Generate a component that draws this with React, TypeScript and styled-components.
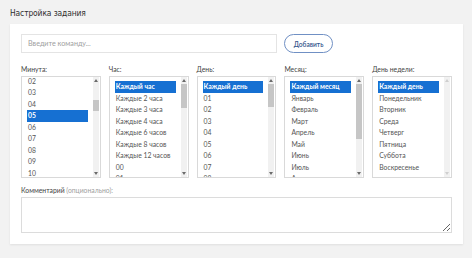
import React, { useLayoutEffect, useRef } from "react";
import styled, { createGlobalStyle } from "styled-components";

const ROW = 11.5;
const PAD = 4;
const VISIBLE = 100;
const ARROW = 7;

const GlobalStyle = createGlobalStyle`
  html, body { margin: 0; padding: 0; background: #fff; }
  body { font-family: Lato, "Open Sans", "DejaVu Sans", sans-serif; }
  * { box-sizing: border-box; }
`;

const Page = styled.div`
  width: 472px;
  height: 258px;
  background: #f2f2f2;
  padding: 0 9px 0 10px;
  display: flex;
  flex-direction: column;
`;

const Title = styled.h1`
  margin: 0;
  height: 24px;
  line-height: 26px;
  font-family: "DejaVu Sans Condensed", "DejaVu Sans", sans-serif;
  font-stretch: condensed;
  font-size: 8.4px;
  font-weight: 400;
  letter-spacing: -0.1px;
  color: #2e2e2e;
`;

const Card = styled.section`
  background: #fff;
  box-shadow: 0 1px 2px rgba(0, 0, 0, 0.08);
  padding: 10px 11px 11px;
`;

const CommandRow = styled.div`
  display: flex;
  gap: 7px;
  align-items: center;
`;

const CommandInput = styled.input`
  width: 256px;
  height: 19px;
  border: 1px solid #e4e4e4;
  padding: 0 6px;
  font-family: inherit;
  font-size: 7.2px;
  color: #333;
  outline: none;
  &::placeholder { color: #a0a0a0; }
`;

const AddButton = styled.button`
  width: 49px;
  height: 19px;
  border: 1.3px solid #7090c4;
  border-radius: 10px;
  background: #fff;
  color: #34558c;
  font-family: inherit;
  font-size: 6.6px;
  font-weight: 600;
  padding: 0;
`;

const Grid = styled.div`
  display: grid;
  grid-template-columns: repeat(5, 1fr);
  gap: 8px;
  margin-top: 11px;
`;

const Field = styled.div`
  display: flex;
  flex-direction: column;
  min-width: 0;
`;

const Label = styled.label`
  display: block;
  height: 10px;
  line-height: 10px;
  font-size: 6.8px;
  color: #444;
  margin-bottom: 2px;
`;

const Muted = styled.span`
  color: #a0a0a0;
`;

const ListBox = styled.div`
  position: relative;
  height: 102px;
  border: 1px solid #d9d9d9;
  background: #fff;
`;

const ListScroll = styled.div`
  height: 100%;
  overflow: hidden;
  padding: ${PAD}px 12px ${PAD}px 5px;
`;

const Option = styled.div<{ $selected?: boolean }>`
  height: ${ROW}px;
  line-height: ${ROW}px;
  font-size: 6.8px;
  padding: 0 1px;
  white-space: nowrap;
  overflow: hidden;
  color: ${(p) => (p.$selected ? "#fff" : "#555")};
  background: ${(p) => (p.$selected ? "#1670d2" : "transparent")};
  font-weight: ${(p) => (p.$selected ? 700 : 400)};
`;

const ScrollBar = styled.div`
  position: absolute;
  top: 0;
  bottom: 0;
  right: 1px;
  width: 6px;
  background: #f1f1f1;
`;

const Thumb = styled.div`
  position: absolute;
  left: 0;
  right: 0;
  background: #c6c6c6;
`;

const Arrow = styled.svg<{ $bottom?: boolean; $disabled?: boolean }>`
  position: absolute;
  left: 1px;
  width: 4px;
  height: 3px;
  ${(p) => (p.$bottom ? "bottom: 2px;" : "top: 2px;")}
  fill: ${(p) => (p.$disabled ? "#cfcfcf" : "#6b6b6b")};
`;

const Comment = styled.div`
  margin-top: 7px;
`;

const CommentArea = styled.textarea`
  display: block;
  width: 100%;
  height: 36px;
  border: 1px solid #dcdcdc;
  resize: vertical;
  font-family: inherit;
  font-size: 7.5px;
  outline: none;
`;

type ListProps = {
  label: string;
  items: string[];
  selected: string;
  scrollTo?: string;
};

function SelectList({ label, items, selected, scrollTo }: ListProps) {
  const ref = useRef<HTMLDivElement>(null);
  const idx = scrollTo ? items.indexOf(scrollTo) : -1;
  const scroll = idx > 0 ? PAD + 1.5 + idx * ROW : 0;
  const content = PAD * 2 + items.length * ROW;
  const scrollable = content > VISIBLE;
  const track = VISIBLE - ARROW * 2;
  const thumbH = scrollable ? Math.max(8, (VISIBLE / content) * track) : 0;
  const thumbTop = scrollable ? ARROW + (scroll / (content - VISIBLE)) * (track - thumbH) : 0;

  useLayoutEffect(() => {
    if (ref.current) ref.current.scrollTop = scroll;
  }, [scroll]);

  return (
    <Field>
      <Label>{label}</Label>
      <ListBox>
        <ListScroll ref={ref}>
          {items.map((it) => (
            <Option key={it} $selected={it === selected}>
              {it}
            </Option>
          ))}
        </ListScroll>
        <ScrollBar>
          <Arrow viewBox="0 0 4 3" $disabled={!scrollable}>
            <polygon points="0,3 2,0 4,3" />
          </Arrow>
          {scrollable && <Thumb style={{ top: thumbTop, height: thumbH }} />}
          <Arrow viewBox="0 0 4 3" $bottom $disabled={!scrollable}>
            <polygon points="0,0 4,0 2,3" />
          </Arrow>
        </ScrollBar>
      </ListBox>
    </Field>
  );
}

const pad = (n: number) => String(n).padStart(2, "0");
const range = (a: number, b: number) => Array.from({ length: b - a + 1 }, (_, i) => pad(a + i));

const minutes = [
  "Каждую минуту",
  "Каждые 2 минуты",
  "Каждые 3 минуты",
  "Каждые 4 минуты",
  "Каждые 5 минут",
  "Каждые 6 минут",
  "Каждые 10 минут",
  "Каждые 12 минут",
  "Каждые 15 минут",
  "Каждые 20 минут",
  "Каждые 30 минут",
  ...range(0, 59),
];

const hours = [
  "Каждый час",
  "Каждые 2 часа",
  "Каждые 3 часа",
  "Каждые 4 часа",
  "Каждые 6 часов",
  "Каждые 8 часов",
  "Каждые 12 часов",
  ...range(0, 23),
];

const days = ["Каждый день", ...range(1, 31)];

const months = [
  "Каждый месяц",
  "Январь",
  "Февраль",
  "Март",
  "Апрель",
  "Май",
  "Июнь",
  "Июль",
  "Август",
  "Сентябрь",
  "Октябрь",
  "Ноябрь",
  "Декабрь",
];

const weekdays = [
  "Каждый день",
  "Понедельник",
  "Вторник",
  "Среда",
  "Четверг",
  "Пятница",
  "Суббота",
  "Воскресенье",
];

export default function App() {
  return (
    <>
      <GlobalStyle />
      <Page>
        <Title>Настройка задания</Title>
        <Card>
          <CommandRow>
            <CommandInput placeholder="Введите команду..." />
            <AddButton type="button">Добавить</AddButton>
          </CommandRow>
          <Grid>
            <SelectList label="Минута:" items={minutes} selected="05" scrollTo="02" />
            <SelectList label="Час:" items={hours} selected="Каждый час" />
            <SelectList label="День:" items={days} selected="Каждый день" />
            <SelectList label="Месяц:" items={months} selected="Каждый месяц" />
            <SelectList label="День недели:" items={weekdays} selected="Каждый день" />
          </Grid>
          <Comment>
            <Label>
              Комментарий <Muted>(опционально):</Muted>
            </Label>
            <CommentArea />
          </Comment>
        </Card>
      </Page>
    </>
  );
}
